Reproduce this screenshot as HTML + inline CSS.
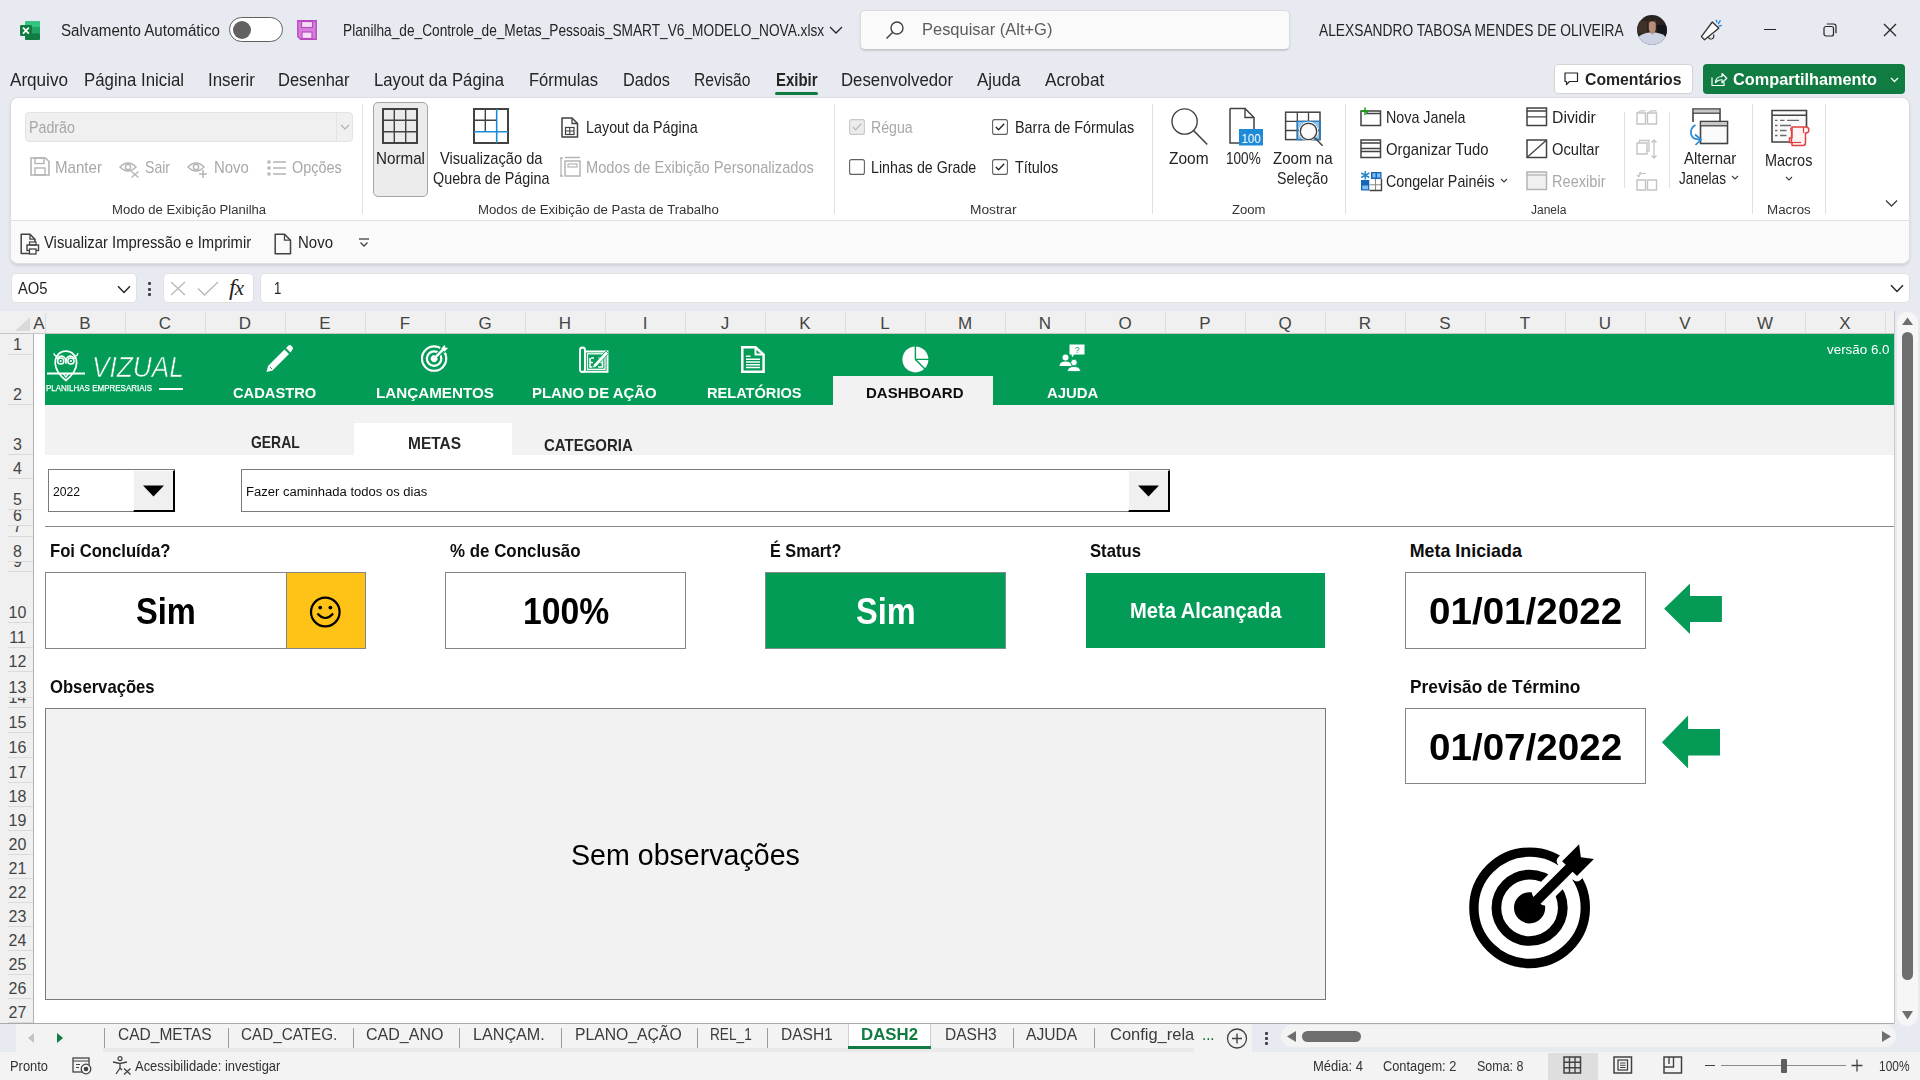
<!DOCTYPE html>
<html><head><meta charset="utf-8"><title>Excel</title>
<style>
html,body{margin:0;padding:0;width:1920px;height:1080px;overflow:hidden;background:#e7eaf0;font-family:"Liberation Sans",sans-serif;}
.t{position:absolute;white-space:nowrap;transform-origin:0 0;}
.a{position:absolute;box-sizing:border-box;}
svg.a{overflow:visible;}
</style></head><body>
<svg class="a" style="left:19px;top:19px;" width="23" height="23" viewBox="0 0 23 23">
<rect x="6" y="2" width="15" height="19" rx="1.5" fill="#21a366"/>
<rect x="6" y="2" width="15" height="6.3" rx="1.5" fill="#33c481"/>
<rect x="6" y="8.3" width="15" height="6.3" fill="#21a366"/>
<rect x="6" y="14.6" width="15" height="6.4" rx="1.5" fill="#107c41"/>
<rect x="1" y="6" width="12" height="11" rx="1.2" fill="#107c41"/>
<path d="M4 8.7 L9.8 14.6 M9.8 8.7 L4 14.6" stroke="#fff" stroke-width="1.7"/>
</svg>
<span class="t" style="left:61.30px;top:22px;font-size:15.84px;line-height:17px;font-weight:normal;font-style:normal;color:#242424;transform:scaleX(0.9553);">Salvamento Automático</span>
<div class="a" style="left:229px;top:17px;width:54px;height:25px;border:1.2px solid #5f5f5f;border-radius:13px;background:#fff;"></div>
<div class="a" style="left:233px;top:21px;width:18px;height:18px;border-radius:50%;background:#616161;"></div>
<svg class="a" style="left:297px;top:20px;" width="20" height="20" viewBox="0 0 20 20">
<path d="M0.8 0.8 H19.2 V19.2 H3.5 L0.8 16.5 Z" fill="#d77fdc" stroke="#b848be" stroke-width="1.4"/>
<rect x="4.5" y="1.5" width="11" height="6" fill="#f5dcf6" stroke="#b848be" stroke-width="1.2"/>
<rect x="5" y="12" width="10" height="6.5" fill="#f5dcf6" stroke="#b848be" stroke-width="1.2"/>
</svg>
<span class="t" style="left:342.50px;top:22px;font-size:15.99px;line-height:17px;font-weight:normal;font-style:normal;color:#242424;transform:scaleX(0.8565);">Planilha_de_Controle_de_Metas_Pessoais_SMART_V6_MODELO_NOVA.xlsx</span>
<svg class="a" style="left:829px;top:26px;" width="14" height="8" viewBox="0 0 14 8"><path d="M1 1 L7 7 L13 1" fill="none" stroke="#242424" stroke-width="1.3"/></svg>
<div class="a" style="left:860px;top:10px;width:430px;height:40px;background:#fafafa;border:1px solid #dcdcdc;border-bottom-color:#c4c4c4;border-radius:5px;box-shadow:0 1px 2px rgba(0,0,0,0.12);"></div>
<svg class="a" style="left:885px;top:20px;" width="20" height="20" viewBox="0 0 20 20"><circle cx="12" cy="8" r="6" fill="none" stroke="#424242" stroke-width="1.4"/><path d="M7.8 12.2 L1.5 18.5" stroke="#424242" stroke-width="1.5"/></svg>
<span class="t" style="left:922.00px;top:20px;font-size:16.28px;line-height:18px;font-weight:normal;font-style:normal;color:#5c5c5c;transform:scaleX(1.0123);">Pesquisar (Alt+G)</span>
<span class="t" style="left:1319.00px;top:22px;font-size:15.99px;line-height:17px;font-weight:normal;font-style:normal;color:#242424;transform:scaleX(0.8612);">ALEXSANDRO TABOSA MENDES DE OLIVEIRA</span>
<svg class="a" style="left:1637px;top:15px;" width="30" height="30" viewBox="0 0 30 30">
<defs><clipPath id="av"><circle cx="15" cy="15" r="14.9"/></clipPath></defs>
<g clip-path="url(#av)">
<rect width="30" height="30" fill="#2a2420"/>
<rect x="0" y="6" width="10" height="12" fill="#3e3128"/>
<rect x="20" y="10" width="10" height="12" fill="#15161a"/>
<path d="M0 30 V23.5 Q4 18.5 12 17.6 H18.5 Q26 18.5 30 23 V30 Z" fill="#cdd3e4"/>
<path d="M11.8 7 Q12 4.2 15.3 4.2 Q18.6 4.2 18.8 7 V13.5 Q18.6 17.8 15.3 17.8 Q12 17.8 11.8 13.5 Z" fill="#b98c78"/>
<path d="M11.6 8.5 Q11.8 3.8 15.3 3.8 Q18.8 3.8 19 8.5 Q17.5 5.8 15.3 6.2 Q13 5.8 11.6 8.5 Z" fill="#2d1e18"/>
<path d="M13.3 17 H17.3 L15.3 20 Z" fill="#b98c78"/>
</g></svg>
<svg class="a" style="left:1700px;top:19px;" width="23" height="23" viewBox="0 0 23 23">
<path d="M1.4 17.6 L12.3 3 L18.8 9.2 L4.5 20.7 Z" fill="#fafafa" stroke="#333" stroke-width="1.3" stroke-linejoin="round"/>
<path d="M8.3 17.2 Q8.8 20.8 12 19.8 Q14.5 18.8 13.6 15.3" fill="none" stroke="#333" stroke-width="1.2"/>
<path d="M16.3 1.2 L16.9 3.2 M20.2 1.6 L18.4 4.6 M18.8 7.2 L21.3 6.5" stroke="#2b88d8" stroke-width="1.3" stroke-linecap="round"/>
</svg>
<div class="a" style="left:1764px;top:29px;width:12px;height:1.2px;background:#242424;"></div>
<svg class="a" style="left:1823px;top:23px;" width="14" height="14" viewBox="0 0 14 14"><rect x="1" y="3.5" width="9.5" height="9.5" rx="2" fill="none" stroke="#242424" stroke-width="1.2"/><path d="M3.8 1 H10.5 Q13 1 13 3.5 V10.2" fill="none" stroke="#242424" stroke-width="1.2"/></svg>
<svg class="a" style="left:1883px;top:23px;" width="14" height="14" viewBox="0 0 14 14"><path d="M1 1 L13 13 M13 1 L1 13" stroke="#242424" stroke-width="1.3"/></svg>
<span class="t" style="left:9.50px;top:70px;font-size:17.44px;line-height:20px;font-weight:normal;font-style:normal;color:#242424;transform:scaleX(0.9806);">Arquivo</span>
<span class="t" style="left:84.00px;top:70px;font-size:17.44px;line-height:20px;font-weight:normal;font-style:normal;color:#242424;transform:scaleX(0.9639);">Página Inicial</span>
<span class="t" style="left:208.00px;top:70px;font-size:17.44px;line-height:20px;font-weight:normal;font-style:normal;color:#242424;transform:scaleX(0.9700);">Inserir</span>
<span class="t" style="left:278.00px;top:70px;font-size:17.44px;line-height:20px;font-weight:normal;font-style:normal;color:#242424;transform:scaleX(0.9454);">Desenhar</span>
<span class="t" style="left:374.00px;top:70px;font-size:17.44px;line-height:20px;font-weight:normal;font-style:normal;color:#242424;transform:scaleX(0.9574);">Layout da Página</span>
<span class="t" style="left:529.00px;top:70px;font-size:17.44px;line-height:20px;font-weight:normal;font-style:normal;color:#242424;transform:scaleX(0.9491);">Fórmulas</span>
<span class="t" style="left:622.50px;top:70px;font-size:17.44px;line-height:20px;font-weight:normal;font-style:normal;color:#242424;transform:scaleX(0.9321);">Dados</span>
<span class="t" style="left:694.00px;top:70px;font-size:17.44px;line-height:20px;font-weight:normal;font-style:normal;color:#242424;transform:scaleX(0.8966);">Revisão</span>
<span class="t" style="left:841.00px;top:70px;font-size:17.44px;line-height:20px;font-weight:normal;font-style:normal;color:#242424;transform:scaleX(0.9627);">Desenvolvedor</span>
<span class="t" style="left:977.00px;top:70px;font-size:17.44px;line-height:20px;font-weight:normal;font-style:normal;color:#242424;transform:scaleX(0.9750);">Ajuda</span>
<span class="t" style="left:1044.50px;top:70px;font-size:17.44px;line-height:20px;font-weight:normal;font-style:normal;color:#242424;transform:scaleX(0.9866);">Acrobat</span>
<span class="t" style="left:775.50px;top:70px;font-size:17.44px;line-height:20px;font-weight:bold;font-style:normal;color:#242424;transform:scaleX(0.8562);">Exibir</span>
<div class="a" style="left:775px;top:92px;width:43px;height:3px;background:#107c41;border-radius:2px;"></div>
<div class="a" style="left:1554px;top:64px;width:139px;height:30px;background:#fff;border:1px solid #d4d4d4;border-radius:4px;"></div>
<svg class="a" style="left:1564px;top:72px;" width="15" height="14" viewBox="0 0 15 14"><path d="M1 1 H13.5 V9.5 H5.5 L2.5 12.5 V9.5 H1 Z" fill="none" stroke="#242424" stroke-width="1.2" stroke-linejoin="round"/></svg>
<span class="t" style="left:1584.50px;top:69px;font-size:17.15px;line-height:20px;font-weight:bold;font-style:normal;color:#242424;transform:scaleX(0.9206);">Comentários</span>
<div class="a" style="left:1703px;top:64px;width:202px;height:30px;background:#107c41;border-radius:4px;"></div>
<svg class="a" style="left:1711px;top:71px;" width="17" height="16" viewBox="0 0 17 16"><path d="M1 6.5 V14.5 H13 V11" fill="none" stroke="#fff" stroke-width="1.2"/>
<path d="M4.5 11.5 Q5 5.5 11 5.5 V2.5 L15.8 7.2 L11 11.8 V8.8 Q7 8.5 4.5 11.5 Z" fill="none" stroke="#fff" stroke-width="1.2" stroke-linejoin="round"/></svg>
<span class="t" style="left:1733.00px;top:69px;font-size:17.15px;line-height:20px;font-weight:bold;font-style:normal;color:#ffffff;transform:scaleX(0.9504);">Compartilhamento</span>
<svg class="a" style="left:1890px;top:77px;" width="9" height="6" viewBox="0 0 9 6"><path d="M1 1 L4.5 4.5 L8 1" fill="none" stroke="#fff" stroke-width="1.3"/></svg>
<div class="a" style="left:10px;top:97px;width:1900px;height:167px;background:#fff;border:1px solid #dadde2;border-radius:8px;box-shadow:0 2px 3px rgba(0,0,0,0.10);"></div>
<div class="a" style="left:11px;top:221px;width:1898px;height:42px;background:#fafafa;border-radius:0 0 7px 7px;"></div>
<div class="a" style="left:11px;top:220px;width:1898px;height:1px;background:#e0e0e0;"></div>
<div class="a" style="left:362px;top:104px;width:1px;height:110px;background:#e1e1e1;"></div>
<div class="a" style="left:834px;top:104px;width:1px;height:110px;background:#e1e1e1;"></div>
<div class="a" style="left:1152px;top:104px;width:1px;height:110px;background:#e1e1e1;"></div>
<div class="a" style="left:1345px;top:104px;width:1px;height:110px;background:#e1e1e1;"></div>
<div class="a" style="left:1752px;top:104px;width:1px;height:110px;background:#e1e1e1;"></div>
<div class="a" style="left:1825px;top:104px;width:1px;height:110px;background:#e1e1e1;"></div>
<div class="a" style="left:1624px;top:112px;width:1px;height:76px;background:#e1e1e1;"></div>
<div class="a" style="left:1669px;top:112px;width:1px;height:76px;background:#e1e1e1;"></div>
<div class="a" style="left:25px;top:112px;width:328px;height:30px;background:#f0f0f0;border:1px solid #e3e3e3;border-radius:4px;"></div>
<div class="a" style="left:336px;top:113px;width:1px;height:28px;background:#e3e3e3;"></div>
<svg class="a" style="left:340px;top:124px;" width="10" height="6" viewBox="0 0 10 6"><path d="M1 1 L5 5 L9 1" fill="none" stroke="#b0b0b0" stroke-width="1.2"/></svg>
<span class="t" style="left:28.50px;top:119px;font-size:15.99px;line-height:17px;font-weight:normal;font-style:normal;color:#a6a6a6;transform:scaleX(0.8902);">Padrão</span>
<svg class="a" style="left:30px;top:157px;" width="20" height="19" viewBox="0 0 20 19"><path d="M1 1 H15.5 L19 4.5 V18 H1 Z" fill="none" stroke="#b4b4b4" stroke-width="1.6"/><rect x="5" y="1" width="9" height="5.5" fill="none" stroke="#b4b4b4" stroke-width="1.4"/><rect x="5" y="11" width="10" height="7" fill="none" stroke="#b4b4b4" stroke-width="1.4"/></svg>
<span class="t" style="left:55.00px;top:159px;font-size:15.99px;line-height:17px;font-weight:normal;font-style:normal;color:#a8a8a8;transform:scaleX(0.9446);">Manter</span>
<svg class="a" style="left:119px;top:160px;" width="21" height="18" viewBox="0 0 21 18"><path d="M1 7 Q9 -1 17 7 Q9 15 1 7 Z" fill="none" stroke="#b4b4b4" stroke-width="1.5"/><circle cx="9" cy="7" r="2.6" fill="none" stroke="#b4b4b4" stroke-width="1.4"/><path d="M12.5 11.5 L19.5 17.5 M19.5 11.5 L12.5 17.5" stroke="#b4b4b4" stroke-width="1.4"/></svg>
<span class="t" style="left:145.00px;top:159px;font-size:15.99px;line-height:17px;font-weight:normal;font-style:normal;color:#a8a8a8;transform:scaleX(0.8794);">Sair</span>
<svg class="a" style="left:187px;top:160px;" width="21" height="18" viewBox="0 0 21 18"><path d="M1 7 Q9 -1 17 7 Q9 15 1 7 Z" fill="none" stroke="#b4b4b4" stroke-width="1.5"/><circle cx="9" cy="7" r="2.6" fill="none" stroke="#b4b4b4" stroke-width="1.4"/><path d="M16 10 V18 M12 14 H20" stroke="#b4b4b4" stroke-width="1.5"/></svg>
<span class="t" style="left:213.50px;top:159px;font-size:15.99px;line-height:17px;font-weight:normal;font-style:normal;color:#a8a8a8;transform:scaleX(0.9326);">Novo</span>
<svg class="a" style="left:267px;top:160px;" width="20" height="16" viewBox="0 0 20 16"><rect x="0.5" y="0.5" width="3" height="3" fill="#b4b4b4"/><rect x="0.5" y="6.5" width="3" height="3" fill="#b4b4b4"/><rect x="0.5" y="12.5" width="3" height="3" fill="#b4b4b4"/><path d="M6 2 H19 M6 8 H19 M6 14 H19" stroke="#b4b4b4" stroke-width="1.5"/></svg>
<span class="t" style="left:292.00px;top:159px;font-size:15.99px;line-height:17px;font-weight:normal;font-style:normal;color:#a8a8a8;transform:scaleX(0.9021);">Opções</span>
<span class="t" style="left:111.50px;top:202px;font-size:13.52px;line-height:15px;font-weight:normal;font-style:normal;color:#333;transform:scaleX(0.9673);">Modo de Exibição Planilha</span>
<div class="a" style="left:373px;top:102px;width:55px;height:95px;background:#ebebeb;border:1px solid #a5a5a5;border-radius:5px;"></div>
<svg class="a" style="left:382px;top:108px;" width="36" height="36" viewBox="0 0 36 36"><rect x="1" y="1" width="34" height="34" fill="none" stroke="#424242" stroke-width="2"/><path d="M12.3 1 V35 M23.7 1 V35 M1 12.3 H35 M1 23.7 H35" stroke="#424242" stroke-width="1.4"/></svg>
<span class="t" style="left:375.50px;top:150px;font-size:15.99px;line-height:17px;font-weight:normal;font-style:normal;color:#242424;transform:scaleX(0.9509);">Normal</span>
<svg class="a" style="left:473px;top:108px;" width="36" height="36" viewBox="0 0 36 36"><rect x="1" y="1" width="34" height="34" fill="none" stroke="#424242" stroke-width="2"/><path d="M12.3 1 V23.7 M1 12.3 H23.7" stroke="#424242" stroke-width="1.4"/><path d="M23.7 1 V35 M1 23.7 H35" stroke="#1e8bd6" stroke-width="1.6"/></svg>
<span class="t" style="left:440.00px;top:150px;font-size:15.99px;line-height:17px;font-weight:normal;font-style:normal;color:#242424;transform:scaleX(0.9175);">Visualização da</span>
<span class="t" style="left:432.50px;top:170px;font-size:15.99px;line-height:17px;font-weight:normal;font-style:normal;color:#242424;transform:scaleX(0.8976);">Quebra de Página</span>
<svg class="a" style="left:561px;top:117px;" width="18" height="21" viewBox="0 0 18 21"><path d="M1 1 H11 L16.5 6.5 V20 H1 Z" fill="none" stroke="#424242" stroke-width="1.5" stroke-linejoin="round"/><path d="M11 1 V6.5 H16.5" fill="none" stroke="#424242" stroke-width="1.3"/><rect x="4.5" y="10.5" width="8.5" height="7" fill="none" stroke="#424242" stroke-width="1.2"/><path d="M8.75 10.5 V17.5 M4.5 14 H13" stroke="#424242" stroke-width="1.1"/></svg>
<span class="t" style="left:585.80px;top:119px;font-size:15.99px;line-height:17px;font-weight:normal;font-style:normal;color:#242424;transform:scaleX(0.8974);">Layout da Página</span>
<svg class="a" style="left:560px;top:156px;" width="21" height="21" viewBox="0 0 21 21"><path d="M1 2 V20 M0 2 H3 M0 20 H3" stroke="#b4b4b4" stroke-width="1.3"/><rect x="5" y="5" width="15" height="15" fill="none" stroke="#b4b4b4" stroke-width="1.5"/><path d="M5 1.5 H20" stroke="#b4b4b4" stroke-width="1.5"/><rect x="8" y="8" width="9" height="3" fill="none" stroke="#b4b4b4" stroke-width="1.2"/></svg>
<span class="t" style="left:585.80px;top:159px;font-size:15.99px;line-height:17px;font-weight:normal;font-style:normal;color:#a8a8a8;transform:scaleX(0.9162);">Modos de Exibição Personalizados</span>
<span class="t" style="left:478.00px;top:202px;font-size:13.52px;line-height:15px;font-weight:normal;font-style:normal;color:#333;transform:scaleX(0.9770);">Modos de Exibição de Pasta de Trabalho</span>
<svg class="a" style="left:849px;top:119px;" width="16" height="16" viewBox="0 0 16 16"><rect x="0.6" y="0.6" width="14.8" height="14.8" rx="2" fill="#ececec" stroke="#c8c8c8" stroke-width="1.1"/><path d="M3.8 8 L6.6 10.8 L12.2 4.8" fill="none" stroke="#bdbdbd" stroke-width="1.3"/></svg>
<span class="t" style="left:871.00px;top:119px;font-size:15.99px;line-height:17px;font-weight:normal;font-style:normal;color:#a8a8a8;transform:scaleX(0.8826);">Régua</span>
<svg class="a" style="left:849px;top:159px;" width="16" height="16" viewBox="0 0 16 16"><rect x="0.6" y="0.6" width="14.8" height="14.8" rx="2" fill="#fff" stroke="#616161" stroke-width="1.1"/></svg>
<span class="t" style="left:871.00px;top:159px;font-size:15.99px;line-height:17px;font-weight:normal;font-style:normal;color:#242424;transform:scaleX(0.8907);">Linhas de Grade</span>
<svg class="a" style="left:992px;top:119px;" width="16" height="16" viewBox="0 0 16 16"><rect x="0.6" y="0.6" width="14.8" height="14.8" rx="2" fill="#fff" stroke="#616161" stroke-width="1.1"/><path d="M3.8 8 L6.6 10.8 L12.2 4.8" fill="none" stroke="#242424" stroke-width="1.3"/></svg>
<span class="t" style="left:1014.70px;top:119px;font-size:15.99px;line-height:17px;font-weight:normal;font-style:normal;color:#242424;transform:scaleX(0.9011);">Barra de Fórmulas</span>
<svg class="a" style="left:992px;top:159px;" width="16" height="16" viewBox="0 0 16 16"><rect x="0.6" y="0.6" width="14.8" height="14.8" rx="2" fill="#fff" stroke="#616161" stroke-width="1.1"/><path d="M3.8 8 L6.6 10.8 L12.2 4.8" fill="none" stroke="#242424" stroke-width="1.3"/></svg>
<span class="t" style="left:1014.70px;top:159px;font-size:15.99px;line-height:17px;font-weight:normal;font-style:normal;color:#242424;transform:scaleX(0.9024);">Títulos</span>
<span class="t" style="left:970.30px;top:202px;font-size:13.52px;line-height:15px;font-weight:normal;font-style:normal;color:#333;transform:scaleX(1.0172);">Mostrar</span>
<svg class="a" style="left:1169px;top:106px;" width="41" height="41" viewBox="0 0 41 41"><circle cx="15.6" cy="15.5" r="12.6" fill="none" stroke="#424242" stroke-width="1.4"/><path d="M24.6 24.6 L38.3 38.5" stroke="#424242" stroke-width="1.5"/></svg>
<span class="t" style="left:1169.00px;top:150px;font-size:15.99px;line-height:17px;font-weight:normal;font-style:normal;color:#242424;transform:scaleX(0.9690);">Zoom</span>
<svg class="a" style="left:1228px;top:107px;" width="36" height="40" viewBox="0 0 36 40"><path d="M2 1.5 H17 L26 10.5 V22 M2 1.5 V36 H11" fill="none" stroke="#424242" stroke-width="1.5"/><path d="M17 1.5 V10.5 H26" fill="none" stroke="#424242" stroke-width="1.4"/><rect x="11" y="22" width="24" height="16.5" fill="#1e8bd6"/><text x="23" y="35.5" font-family="Liberation Sans" font-size="13.5" fill="#fff" text-anchor="middle" textLength="19" lengthAdjust="spacingAndGlyphs">100</text></svg>
<span class="t" style="left:1226.00px;top:150px;font-size:15.99px;line-height:17px;font-weight:normal;font-style:normal;color:#242424;transform:scaleX(0.8484);">100%</span>
<svg class="a" style="left:1284px;top:110px;" width="42" height="38" viewBox="0 0 42 38"><rect x="13.3" y="11.4" width="22.7" height="18.2" fill="#8cc4f0"/><rect x="1.6" y="2.2" width="34.4" height="27.4" fill="none" stroke="#424242" stroke-width="1.5"/><path d="M13.3 2.2 V29.6 M24.5 2.2 V29.6 M1.6 11.4 H36 M1.6 20.5 H36" stroke="#424242" stroke-width="1.3"/><path d="M13.3 11.4 H36 V29.6 H13.3 Z" fill="none" stroke="#2a7fc9" stroke-width="1.3"/><circle cx="24.5" cy="21.4" r="8.2" fill="#fafafa" stroke="#fff" stroke-width="3.2"/><circle cx="24.5" cy="21.4" r="8.2" fill="#fafafa" stroke="#424242" stroke-width="1.4"/><path d="M30.3 27.2 L38.6 35.7" stroke="#424242" stroke-width="1.5"/></svg>
<span class="t" style="left:1272.80px;top:150px;font-size:15.99px;line-height:17px;font-weight:normal;font-style:normal;color:#242424;transform:scaleX(0.9444);">Zoom na</span>
<span class="t" style="left:1277.40px;top:170px;font-size:15.99px;line-height:17px;font-weight:normal;font-style:normal;color:#242424;transform:scaleX(0.8826);">Seleção</span>
<span class="t" style="left:1232.00px;top:202px;font-size:13.52px;line-height:15px;font-weight:normal;font-style:normal;color:#333;transform:scaleX(0.9696);">Zoom</span>
<svg class="a" style="left:1360px;top:107px;" width="22" height="20" viewBox="0 0 22 20"><rect x="1" y="4" width="19.5" height="14.5" fill="none" stroke="#424242" stroke-width="1.5"/><path d="M7 4 V6.5 H20.5" fill="none" stroke="#424242" stroke-width="1.4"/><path d="M5 0.5 V8 M1.2 4.2 H8.8" stroke="#13a10e" stroke-width="1.5"/></svg>
<span class="t" style="left:1386.00px;top:109px;font-size:15.99px;line-height:17px;font-weight:normal;font-style:normal;color:#242424;transform:scaleX(0.8932);">Nova Janela</span>
<svg class="a" style="left:1360px;top:139px;" width="22" height="20" viewBox="0 0 22 20"><rect x="1" y="1" width="19.5" height="17.5" fill="none" stroke="#424242" stroke-width="1.5"/><path d="M1 4 H20.5 M1 9.5 H20.5 M1 12.5 H20.5" stroke="#424242" stroke-width="1.3"/></svg>
<span class="t" style="left:1386.00px;top:141px;font-size:15.99px;line-height:17px;font-weight:normal;font-style:normal;color:#242424;transform:scaleX(0.9310);">Organizar Tudo</span>
<svg class="a" style="left:1360px;top:170px;" width="22" height="22" viewBox="0 0 22 22"><rect x="11" y="2" width="10.5" height="7" fill="#1565b8"/><rect x="12.5" y="3.3" width="3" height="4.2" fill="#7cc2f5"/><rect x="17" y="3.3" width="3.3" height="4.2" fill="#7cc2f5"/><rect x="1" y="10" width="8.5" height="10.5" fill="#1565b8"/><rect x="2.3" y="15.5" width="5.8" height="3.8" fill="#7cc2f5"/><rect x="9.5" y="9" width="12" height="11.5" fill="#fff"/><path d="M15.5 9 V20.5 M9.5 14.7 H21.5" stroke="#8a8a8a" stroke-width="1.1"/><path d="M21.5 9 V20.5 H9.5" fill="none" stroke="#424242" stroke-width="1.4"/><path d="M5.3 1 V9.5 M1.3 3 L9.3 7.5 M9.3 3 L1.3 7.5" stroke="#2a86c8" stroke-width="1.5"/></svg>
<span class="t" style="left:1386.00px;top:173px;font-size:15.99px;line-height:17px;font-weight:normal;font-style:normal;color:#242424;transform:scaleX(0.8927);">Congelar Painéis</span>
<svg class="a" style="left:1500px;top:178px;" width="8" height="6" viewBox="0 0 8 6"><path d="M1 1 L4 4 L7 1" fill="none" stroke="#424242" stroke-width="1.2"/></svg>
<svg class="a" style="left:1526px;top:107px;" width="22" height="20" viewBox="0 0 22 20"><rect x="1" y="1" width="19.5" height="17.5" fill="none" stroke="#424242" stroke-width="1.5"/><path d="M1 4 H20.5 M1 9.8 H20.5" stroke="#424242" stroke-width="1.3"/></svg>
<span class="t" style="left:1552.40px;top:109px;font-size:15.99px;line-height:17px;font-weight:normal;font-style:normal;color:#242424;transform:scaleX(0.9861);">Dividir</span>
<svg class="a" style="left:1526px;top:139px;" width="22" height="20" viewBox="0 0 22 20"><rect x="1" y="1" width="19.5" height="17.5" fill="none" stroke="#424242" stroke-width="1.5"/><path d="M1.5 18 L20 1.5" stroke="#424242" stroke-width="1.3"/></svg>
<span class="t" style="left:1552.40px;top:141px;font-size:15.99px;line-height:17px;font-weight:normal;font-style:normal;color:#242424;transform:scaleX(0.9198);">Ocultar</span>
<svg class="a" style="left:1526px;top:171px;" width="22" height="20" viewBox="0 0 22 20"><rect x="1" y="1" width="19.5" height="17.5" fill="#f0f0f0" stroke="#b4b4b4" stroke-width="1.5"/><path d="M1 4 H20.5" stroke="#b4b4b4" stroke-width="1.3"/></svg>
<span class="t" style="left:1552.40px;top:173px;font-size:15.99px;line-height:17px;font-weight:normal;font-style:normal;color:#a8a8a8;transform:scaleX(0.9123);">Reexibir</span>
<svg class="a" style="left:1636px;top:110px;" width="22" height="15" viewBox="0 0 22 15"><path d="M1 3 H9.5 V14 H1 Z M11.5 3 H20.5 V14 H11.5 Z" fill="none" stroke="#c4c4c4" stroke-width="1.4"/><path d="M1 3 L5 0.8 H9.5 M11.5 3 L15 0.8 H20.5" fill="none" stroke="#c4c4c4" stroke-width="1.2"/></svg>
<svg class="a" style="left:1636px;top:139px;" width="22" height="20" viewBox="0 0 22 20"><path d="M1 4 H11 V15 H1 Z" fill="none" stroke="#c4c4c4" stroke-width="1.4"/><path d="M3.5 4 V1.5 H13 V12 H11" fill="none" stroke="#c4c4c4" stroke-width="1.3"/><path d="M18 1 V19 M15.5 3.5 L18 1 L20.5 3.5 M15.5 16.5 L18 19 L20.5 16.5" fill="none" stroke="#c4c4c4" stroke-width="1.3"/></svg>
<svg class="a" style="left:1636px;top:172px;" width="22" height="19" viewBox="0 0 22 19"><path d="M1 8 H9.5 V18 H1 Z M11.5 8 H20.5 V18 H11.5 Z" fill="none" stroke="#c4c4c4" stroke-width="1.4"/><path d="M3 5 Q3 1.5 7 1.5 H10 M5 0 L3 2 M3 5 L1 3" fill="none" stroke="#c4c4c4" stroke-width="1.2"/></svg>
<svg class="a" style="left:1688px;top:107px;" width="42" height="40" viewBox="0 0 42 40"><path d="M5 15 V2 H32 V15" fill="none" stroke="#424242" stroke-width="1.6"/><rect x="5.8" y="2.8" width="25.4" height="3" fill="#c8c8c8"/><path d="M5 6.2 H32" stroke="#424242" stroke-width="1.3"/><rect x="12.5" y="14.5" width="27" height="22" fill="#fafafa" stroke="#424242" stroke-width="1.6"/><rect x="13.3" y="15.3" width="25.4" height="3" fill="#c8c8c8"/><path d="M12.5 18.8 H39.5" stroke="#424242" stroke-width="1.3"/><path d="M7.5 18 Q2 21 3 27 Q4.5 33 13 32.5" fill="none" stroke="#2a8ad4" stroke-width="1.7"/><path d="M7 27.5 L13 32.5 L7.5 38" fill="none" stroke="#2a8ad4" stroke-width="1.7"/></svg>
<span class="t" style="left:1683.50px;top:150px;font-size:15.99px;line-height:17px;font-weight:normal;font-style:normal;color:#242424;transform:scaleX(0.9341);">Alternar</span>
<span class="t" style="left:1679.00px;top:170px;font-size:15.99px;line-height:17px;font-weight:normal;font-style:normal;color:#242424;transform:scaleX(0.8528);">Janelas</span>
<svg class="a" style="left:1731px;top:175px;" width="8" height="6" viewBox="0 0 8 6"><path d="M1 1 L4 4 L7 1" fill="none" stroke="#424242" stroke-width="1.2"/></svg>
<span class="t" style="left:1531.20px;top:202px;font-size:13.52px;line-height:15px;font-weight:normal;font-style:normal;color:#333;transform:scaleX(0.8883);">Janela</span>
<svg class="a" style="left:1770px;top:108px;" width="41" height="40" viewBox="0 0 41 40"><path d="M21 34 H2 V2.5 H36.5 V25" fill="#fafafa" stroke="#424242" stroke-width="1.6"/><path d="M2 7.3 H36.5" stroke="#424242" stroke-width="1.5"/><path d="M5 12.3 H7.5 M10 12.3 H14.5 M17 12.3 H29 M5 17.5 H7.5 M10 17.5 H21 M5 22.5 H7.5 M10 22.5 H16.5 M5 27.5 H7.5 M10 27.5 H16.5" stroke="#6b6b6b" stroke-width="1.3"/><path d="M22 19 H36 Q38.8 19 38.8 22 Q38.8 25 36 25 H35.5 V35 Q35.5 37.5 33 37.5 H22 V34.5 H19.5 V30 H22 Z" fill="#fdf3f3" stroke="#e0403f" stroke-width="1.5" stroke-linejoin="round"/><path d="M21.5 19.5 Q20 21 21.5 23 V34.5" fill="none" stroke="#e0403f" stroke-width="1.3"/><path d="M19.5 34.5 H31" stroke="#e0403f" stroke-width="1.2"/><path d="M33.5 19 V25" stroke="#e0403f" stroke-width="1.2"/></svg>
<span class="t" style="left:1765.40px;top:152px;font-size:15.99px;line-height:17px;font-weight:normal;font-style:normal;color:#242424;transform:scaleX(0.9044);">Macros</span>
<svg class="a" style="left:1785px;top:176px;" width="8" height="6" viewBox="0 0 8 6"><path d="M1 1 L4 4 L7 1" fill="none" stroke="#424242" stroke-width="1.2"/></svg>
<span class="t" style="left:1766.90px;top:202px;font-size:13.52px;line-height:15px;font-weight:normal;font-style:normal;color:#333;transform:scaleX(0.9885);">Macros</span>
<svg class="a" style="left:1885px;top:199px;" width="13" height="9" viewBox="0 0 13 9"><path d="M1 1.5 L6.5 7 L12 1.5" fill="none" stroke="#424242" stroke-width="1.4"/></svg>
<svg class="a" style="left:20px;top:233px;" width="20" height="22" viewBox="0 0 20 22"><path d="M9 20.5 H1.2 V1.2 H10 L15 6.2 V9" fill="none" stroke="#424242" stroke-width="1.5" stroke-linejoin="round"/><path d="M10 1.2 V6.2 H15" fill="none" stroke="#424242" stroke-width="1.3"/><rect x="7" y="12" width="11.5" height="5.5" fill="#fff" stroke="#424242" stroke-width="1.4"/><rect x="9.5" y="9" width="6.5" height="3" fill="none" stroke="#424242" stroke-width="1.2"/><rect x="9.5" y="16" width="6.5" height="5" fill="#fff" stroke="#424242" stroke-width="1.3"/></svg>
<span class="t" style="left:44.40px;top:232px;font-size:17.15px;line-height:20px;font-weight:normal;font-style:normal;color:#242424;transform:scaleX(0.8643);">Visualizar Impressão e Imprimir</span>
<svg class="a" style="left:274px;top:233px;" width="18" height="22" viewBox="0 0 18 22"><path d="M1.2 1.2 H10.5 L16.5 7.2 V20.8 H1.2 Z" fill="none" stroke="#424242" stroke-width="1.5" stroke-linejoin="round"/><path d="M10.5 1.2 V7.2 H16.5" fill="none" stroke="#424242" stroke-width="1.3"/></svg>
<span class="t" style="left:298.30px;top:232px;font-size:17.15px;line-height:20px;font-weight:normal;font-style:normal;color:#242424;transform:scaleX(0.8743);">Novo</span>
<svg class="a" style="left:358px;top:238px;" width="12" height="10" viewBox="0 0 12 10"><path d="M1 1 H11" stroke="#424242" stroke-width="1.3"/><path d="M2.5 4.5 L6 8 L9.5 4.5" fill="none" stroke="#424242" stroke-width="1.3"/></svg>
<div class="a" style="left:11px;top:273px;width:126px;height:30px;background:#fff;border:1px solid #e1e1e1;border-radius:5px;"></div>
<span class="t" style="left:17.70px;top:279px;font-size:16.72px;line-height:19px;font-weight:normal;font-style:normal;color:#242424;transform:scaleX(0.8850);">AO5</span>
<svg class="a" style="left:117px;top:285px;" width="14" height="9" viewBox="0 0 14 9"><path d="M1 1.2 L7 7.5 L13 1.2" fill="none" stroke="#242424" stroke-width="1.4"/></svg>
<div class="a" style="left:148px;top:282px;width:3px;height:3px;background:#424242;border-radius:1px;"></div>
<div class="a" style="left:148px;top:287.5px;width:3px;height:3px;background:#424242;border-radius:1px;"></div>
<div class="a" style="left:148px;top:293px;width:3px;height:3px;background:#424242;border-radius:1px;"></div>
<div class="a" style="left:163px;top:273px;width:91px;height:30px;background:#fff;border:1px solid #e1e1e1;border-radius:5px;"></div>
<svg class="a" style="left:170px;top:281px;" width="16" height="15" viewBox="0 0 16 15"><path d="M1 1 L15 14 M15 1 L1 14" stroke="#b8b8b8" stroke-width="1.3"/></svg>
<svg class="a" style="left:197px;top:281px;" width="22" height="15" viewBox="0 0 22 15"><path d="M1 7.5 L7.5 14 L21 1" fill="none" stroke="#b8b8b8" stroke-width="1.3"/></svg>
<span class="t" style="left:229px;top:273px;font-family:'Liberation Serif',serif;font-style:italic;font-weight:normal;font-size:24px;line-height:28px;color:#242424;">f<span style="font-size:21px;position:relative;left:-1px;">x</span></span>
<div class="a" style="left:260px;top:273px;width:1650px;height:30px;background:#fff;border:1px solid #e1e1e1;border-radius:5px;"></div>
<span class="t" style="left:274.00px;top:279px;font-size:16.72px;line-height:19px;font-weight:normal;font-style:normal;color:#242424;transform:scaleX(0.7855);">1</span>
<svg class="a" style="left:1890px;top:284px;" width="14" height="9" viewBox="0 0 14 9"><path d="M1 1.2 L7 7.5 L13 1.2" fill="none" stroke="#242424" stroke-width="1.4"/></svg>
<div class="a" style="left:0px;top:311px;width:1894px;height:23px;background:#f0f0f0;"></div>
<div class="a" style="left:0px;top:334px;width:33px;height:689px;background:#f0f0f0;"></div>
<div class="a" style="left:33px;top:334px;width:1861px;height:689px;background:#fff;"></div>
<svg class="a" style="left:15px;top:317px;" width="16" height="14" viewBox="0 0 16 14"><path d="M15 0 V14 H0 Z" fill="#dadada"/></svg>
<div class="a" style="left:0px;top:333px;width:1894px;height:1px;background:#c6c6c6;"></div>
<div class="a" style="left:33px;top:334px;width:1px;height:689px;background:#b0b0b0;"></div>
<div class="a" style="left:33px;top:311px;width:12px;height:22px;overflow:hidden;"><span class="t" style="left:0;width:12px;text-align:center;top:3px;font-size:17px;line-height:20px;color:#444444;">A</span></div>
<div class="a" style="left:45px;top:313px;width:1px;height:20px;background:#dcdcdc;"></div>
<div class="a" style="left:45px;top:311px;width:80px;height:22px;overflow:hidden;"><span class="t" style="left:0;width:80px;text-align:center;top:3px;font-size:17px;line-height:20px;color:#444444;">B</span></div>
<div class="a" style="left:125px;top:313px;width:1px;height:20px;background:#dcdcdc;"></div>
<div class="a" style="left:125px;top:311px;width:80px;height:22px;overflow:hidden;"><span class="t" style="left:0;width:80px;text-align:center;top:3px;font-size:17px;line-height:20px;color:#444444;">C</span></div>
<div class="a" style="left:205px;top:313px;width:1px;height:20px;background:#dcdcdc;"></div>
<div class="a" style="left:205px;top:311px;width:80px;height:22px;overflow:hidden;"><span class="t" style="left:0;width:80px;text-align:center;top:3px;font-size:17px;line-height:20px;color:#444444;">D</span></div>
<div class="a" style="left:285px;top:313px;width:1px;height:20px;background:#dcdcdc;"></div>
<div class="a" style="left:285px;top:311px;width:80px;height:22px;overflow:hidden;"><span class="t" style="left:0;width:80px;text-align:center;top:3px;font-size:17px;line-height:20px;color:#444444;">E</span></div>
<div class="a" style="left:365px;top:313px;width:1px;height:20px;background:#dcdcdc;"></div>
<div class="a" style="left:365px;top:311px;width:80px;height:22px;overflow:hidden;"><span class="t" style="left:0;width:80px;text-align:center;top:3px;font-size:17px;line-height:20px;color:#444444;">F</span></div>
<div class="a" style="left:445px;top:313px;width:1px;height:20px;background:#dcdcdc;"></div>
<div class="a" style="left:445px;top:311px;width:80px;height:22px;overflow:hidden;"><span class="t" style="left:0;width:80px;text-align:center;top:3px;font-size:17px;line-height:20px;color:#444444;">G</span></div>
<div class="a" style="left:525px;top:313px;width:1px;height:20px;background:#dcdcdc;"></div>
<div class="a" style="left:525px;top:311px;width:80px;height:22px;overflow:hidden;"><span class="t" style="left:0;width:80px;text-align:center;top:3px;font-size:17px;line-height:20px;color:#444444;">H</span></div>
<div class="a" style="left:605px;top:313px;width:1px;height:20px;background:#dcdcdc;"></div>
<div class="a" style="left:605px;top:311px;width:80px;height:22px;overflow:hidden;"><span class="t" style="left:0;width:80px;text-align:center;top:3px;font-size:17px;line-height:20px;color:#444444;">I</span></div>
<div class="a" style="left:685px;top:313px;width:1px;height:20px;background:#dcdcdc;"></div>
<div class="a" style="left:685px;top:311px;width:80px;height:22px;overflow:hidden;"><span class="t" style="left:0;width:80px;text-align:center;top:3px;font-size:17px;line-height:20px;color:#444444;">J</span></div>
<div class="a" style="left:765px;top:313px;width:1px;height:20px;background:#dcdcdc;"></div>
<div class="a" style="left:765px;top:311px;width:80px;height:22px;overflow:hidden;"><span class="t" style="left:0;width:80px;text-align:center;top:3px;font-size:17px;line-height:20px;color:#444444;">K</span></div>
<div class="a" style="left:845px;top:313px;width:1px;height:20px;background:#dcdcdc;"></div>
<div class="a" style="left:845px;top:311px;width:80px;height:22px;overflow:hidden;"><span class="t" style="left:0;width:80px;text-align:center;top:3px;font-size:17px;line-height:20px;color:#444444;">L</span></div>
<div class="a" style="left:925px;top:313px;width:1px;height:20px;background:#dcdcdc;"></div>
<div class="a" style="left:925px;top:311px;width:80px;height:22px;overflow:hidden;"><span class="t" style="left:0;width:80px;text-align:center;top:3px;font-size:17px;line-height:20px;color:#444444;">M</span></div>
<div class="a" style="left:1005px;top:313px;width:1px;height:20px;background:#dcdcdc;"></div>
<div class="a" style="left:1005px;top:311px;width:80px;height:22px;overflow:hidden;"><span class="t" style="left:0;width:80px;text-align:center;top:3px;font-size:17px;line-height:20px;color:#444444;">N</span></div>
<div class="a" style="left:1085px;top:313px;width:1px;height:20px;background:#dcdcdc;"></div>
<div class="a" style="left:1085px;top:311px;width:80px;height:22px;overflow:hidden;"><span class="t" style="left:0;width:80px;text-align:center;top:3px;font-size:17px;line-height:20px;color:#444444;">O</span></div>
<div class="a" style="left:1165px;top:313px;width:1px;height:20px;background:#dcdcdc;"></div>
<div class="a" style="left:1165px;top:311px;width:80px;height:22px;overflow:hidden;"><span class="t" style="left:0;width:80px;text-align:center;top:3px;font-size:17px;line-height:20px;color:#444444;">P</span></div>
<div class="a" style="left:1245px;top:313px;width:1px;height:20px;background:#dcdcdc;"></div>
<div class="a" style="left:1245px;top:311px;width:80px;height:22px;overflow:hidden;"><span class="t" style="left:0;width:80px;text-align:center;top:3px;font-size:17px;line-height:20px;color:#444444;">Q</span></div>
<div class="a" style="left:1325px;top:313px;width:1px;height:20px;background:#dcdcdc;"></div>
<div class="a" style="left:1325px;top:311px;width:80px;height:22px;overflow:hidden;"><span class="t" style="left:0;width:80px;text-align:center;top:3px;font-size:17px;line-height:20px;color:#444444;">R</span></div>
<div class="a" style="left:1405px;top:313px;width:1px;height:20px;background:#dcdcdc;"></div>
<div class="a" style="left:1405px;top:311px;width:80px;height:22px;overflow:hidden;"><span class="t" style="left:0;width:80px;text-align:center;top:3px;font-size:17px;line-height:20px;color:#444444;">S</span></div>
<div class="a" style="left:1485px;top:313px;width:1px;height:20px;background:#dcdcdc;"></div>
<div class="a" style="left:1485px;top:311px;width:80px;height:22px;overflow:hidden;"><span class="t" style="left:0;width:80px;text-align:center;top:3px;font-size:17px;line-height:20px;color:#444444;">T</span></div>
<div class="a" style="left:1565px;top:313px;width:1px;height:20px;background:#dcdcdc;"></div>
<div class="a" style="left:1565px;top:311px;width:80px;height:22px;overflow:hidden;"><span class="t" style="left:0;width:80px;text-align:center;top:3px;font-size:17px;line-height:20px;color:#444444;">U</span></div>
<div class="a" style="left:1645px;top:313px;width:1px;height:20px;background:#dcdcdc;"></div>
<div class="a" style="left:1645px;top:311px;width:80px;height:22px;overflow:hidden;"><span class="t" style="left:0;width:80px;text-align:center;top:3px;font-size:17px;line-height:20px;color:#444444;">V</span></div>
<div class="a" style="left:1725px;top:313px;width:1px;height:20px;background:#dcdcdc;"></div>
<div class="a" style="left:1725px;top:311px;width:80px;height:22px;overflow:hidden;"><span class="t" style="left:0;width:80px;text-align:center;top:3px;font-size:17px;line-height:20px;color:#444444;">W</span></div>
<div class="a" style="left:1805px;top:313px;width:1px;height:20px;background:#dcdcdc;"></div>
<div class="a" style="left:1805px;top:311px;width:80px;height:22px;overflow:hidden;"><span class="t" style="left:0;width:80px;text-align:center;top:3px;font-size:17px;line-height:20px;color:#444444;">X</span></div>
<div class="a" style="left:1885px;top:313px;width:1px;height:20px;background:#dcdcdc;"></div>
<div class="a" style="left:8px;top:354px;width:25px;height:1px;background:#dadada;"></div>
<div class="a" style="left:0;top:334px;width:33px;height:20px;overflow:hidden;"><span class="t" style="left:1px;width:33px;text-align:center;top:2.9559999999999995px;font-size:16px;line-height:16px;color:#444444;">1</span></div>
<div class="a" style="left:8px;top:404px;width:25px;height:1px;background:#dadada;"></div>
<div class="a" style="left:0;top:355px;width:33px;height:49px;overflow:hidden;"><span class="t" style="left:1px;width:33px;text-align:center;top:31.956px;font-size:16px;line-height:16px;color:#444444;">2</span></div>
<div class="a" style="left:8px;top:454px;width:25px;height:1px;background:#dadada;"></div>
<div class="a" style="left:0;top:405px;width:33px;height:49px;overflow:hidden;"><span class="t" style="left:1px;width:33px;text-align:center;top:31.956px;font-size:16px;line-height:16px;color:#444444;">3</span></div>
<div class="a" style="left:8px;top:478px;width:25px;height:1px;background:#dadada;"></div>
<div class="a" style="left:0;top:455px;width:33px;height:23px;overflow:hidden;"><span class="t" style="left:1px;width:33px;text-align:center;top:5.9559999999999995px;font-size:16px;line-height:16px;color:#444444;">4</span></div>
<div class="a" style="left:8px;top:509px;width:25px;height:1px;background:#dadada;"></div>
<div class="a" style="left:0;top:479px;width:33px;height:30px;overflow:hidden;"><span class="t" style="left:1px;width:33px;text-align:center;top:12.956px;font-size:16px;line-height:16px;color:#444444;">5</span></div>
<div class="a" style="left:8px;top:525px;width:25px;height:1px;background:#dadada;"></div>
<div class="a" style="left:0;top:510px;width:33px;height:15px;overflow:hidden;"><span class="t" style="left:1px;width:33px;text-align:center;top:-2.0440000000000005px;font-size:16px;line-height:16px;color:#444444;">6</span></div>
<div class="a" style="left:8px;top:536px;width:25px;height:1px;background:#dadada;"></div>
<div class="a" style="left:0;top:526px;width:33px;height:10px;overflow:hidden;"><span class="t" style="left:1px;width:33px;text-align:center;top:-7.0440000000000005px;font-size:16px;line-height:16px;color:#444444;">7</span></div>
<div class="a" style="left:8px;top:561px;width:25px;height:1px;background:#dadada;"></div>
<div class="a" style="left:0;top:537px;width:33px;height:24px;overflow:hidden;"><span class="t" style="left:1px;width:33px;text-align:center;top:6.9559999999999995px;font-size:16px;line-height:16px;color:#444444;">8</span></div>
<div class="a" style="left:8px;top:571px;width:25px;height:1px;background:#dadada;"></div>
<div class="a" style="left:0;top:562px;width:33px;height:9px;overflow:hidden;"><span class="t" style="left:1px;width:33px;text-align:center;top:-8.044px;font-size:16px;line-height:16px;color:#444444;">9</span></div>
<div class="a" style="left:8px;top:622px;width:25px;height:1px;background:#dadada;"></div>
<div class="a" style="left:0;top:572px;width:33px;height:50px;overflow:hidden;"><span class="t" style="left:1px;width:33px;text-align:center;top:32.956px;font-size:16px;line-height:16px;color:#444444;">10</span></div>
<div class="a" style="left:8px;top:647px;width:25px;height:1px;background:#dadada;"></div>
<div class="a" style="left:0;top:623px;width:33px;height:24px;overflow:hidden;"><span class="t" style="left:1px;width:33px;text-align:center;top:6.9559999999999995px;font-size:16px;line-height:16px;color:#444444;">11</span></div>
<div class="a" style="left:8px;top:671px;width:25px;height:1px;background:#dadada;"></div>
<div class="a" style="left:0;top:648px;width:33px;height:23px;overflow:hidden;"><span class="t" style="left:1px;width:33px;text-align:center;top:5.9559999999999995px;font-size:16px;line-height:16px;color:#444444;">12</span></div>
<div class="a" style="left:8px;top:697px;width:25px;height:1px;background:#dadada;"></div>
<div class="a" style="left:0;top:672px;width:33px;height:25px;overflow:hidden;"><span class="t" style="left:1px;width:33px;text-align:center;top:7.9559999999999995px;font-size:16px;line-height:16px;color:#444444;">13</span></div>
<div class="a" style="left:8px;top:707px;width:25px;height:1px;background:#dadada;"></div>
<div class="a" style="left:0;top:698px;width:33px;height:9px;overflow:hidden;"><span class="t" style="left:1px;width:33px;text-align:center;top:-8.044px;font-size:16px;line-height:16px;color:#444444;">14</span></div>
<div class="a" style="left:8px;top:732px;width:25px;height:1px;background:#dadada;"></div>
<div class="a" style="left:0;top:708px;width:33px;height:24px;overflow:hidden;"><span class="t" style="left:1px;width:33px;text-align:center;top:6.9559999999999995px;font-size:16px;line-height:16px;color:#444444;">15</span></div>
<div class="a" style="left:8px;top:757px;width:25px;height:1px;background:#dadada;"></div>
<div class="a" style="left:0;top:733px;width:33px;height:24px;overflow:hidden;"><span class="t" style="left:1px;width:33px;text-align:center;top:6.9559999999999995px;font-size:16px;line-height:16px;color:#444444;">16</span></div>
<div class="a" style="left:8px;top:782px;width:25px;height:1px;background:#dadada;"></div>
<div class="a" style="left:0;top:758px;width:33px;height:24px;overflow:hidden;"><span class="t" style="left:1px;width:33px;text-align:center;top:6.9559999999999995px;font-size:16px;line-height:16px;color:#444444;">17</span></div>
<div class="a" style="left:8px;top:806px;width:25px;height:1px;background:#dadada;"></div>
<div class="a" style="left:0;top:783px;width:33px;height:23px;overflow:hidden;"><span class="t" style="left:1px;width:33px;text-align:center;top:5.9559999999999995px;font-size:16px;line-height:16px;color:#444444;">18</span></div>
<div class="a" style="left:8px;top:830px;width:25px;height:1px;background:#dadada;"></div>
<div class="a" style="left:0;top:807px;width:33px;height:23px;overflow:hidden;"><span class="t" style="left:1px;width:33px;text-align:center;top:5.9559999999999995px;font-size:16px;line-height:16px;color:#444444;">19</span></div>
<div class="a" style="left:8px;top:854px;width:25px;height:1px;background:#dadada;"></div>
<div class="a" style="left:0;top:831px;width:33px;height:23px;overflow:hidden;"><span class="t" style="left:1px;width:33px;text-align:center;top:5.9559999999999995px;font-size:16px;line-height:16px;color:#444444;">20</span></div>
<div class="a" style="left:8px;top:878px;width:25px;height:1px;background:#dadada;"></div>
<div class="a" style="left:0;top:855px;width:33px;height:23px;overflow:hidden;"><span class="t" style="left:1px;width:33px;text-align:center;top:5.9559999999999995px;font-size:16px;line-height:16px;color:#444444;">21</span></div>
<div class="a" style="left:8px;top:902px;width:25px;height:1px;background:#dadada;"></div>
<div class="a" style="left:0;top:879px;width:33px;height:23px;overflow:hidden;"><span class="t" style="left:1px;width:33px;text-align:center;top:5.9559999999999995px;font-size:16px;line-height:16px;color:#444444;">22</span></div>
<div class="a" style="left:8px;top:926px;width:25px;height:1px;background:#dadada;"></div>
<div class="a" style="left:0;top:903px;width:33px;height:23px;overflow:hidden;"><span class="t" style="left:1px;width:33px;text-align:center;top:5.9559999999999995px;font-size:16px;line-height:16px;color:#444444;">23</span></div>
<div class="a" style="left:8px;top:950px;width:25px;height:1px;background:#dadada;"></div>
<div class="a" style="left:0;top:927px;width:33px;height:23px;overflow:hidden;"><span class="t" style="left:1px;width:33px;text-align:center;top:5.9559999999999995px;font-size:16px;line-height:16px;color:#444444;">24</span></div>
<div class="a" style="left:8px;top:974px;width:25px;height:1px;background:#dadada;"></div>
<div class="a" style="left:0;top:951px;width:33px;height:23px;overflow:hidden;"><span class="t" style="left:1px;width:33px;text-align:center;top:5.9559999999999995px;font-size:16px;line-height:16px;color:#444444;">25</span></div>
<div class="a" style="left:8px;top:998px;width:25px;height:1px;background:#dadada;"></div>
<div class="a" style="left:0;top:975px;width:33px;height:23px;overflow:hidden;"><span class="t" style="left:1px;width:33px;text-align:center;top:5.9559999999999995px;font-size:16px;line-height:16px;color:#444444;">26</span></div>
<div class="a" style="left:8px;top:1022px;width:25px;height:1px;background:#dadada;"></div>
<div class="a" style="left:0;top:999px;width:33px;height:23px;overflow:hidden;"><span class="t" style="left:1px;width:33px;text-align:center;top:5.9559999999999995px;font-size:16px;line-height:16px;color:#444444;">27</span></div>
<div class="a" style="left:45px;top:334px;width:1849px;height:71px;background:#039c57;"></div>
<div class="a" style="left:833px;top:376px;width:160px;height:29px;background:#f2f2f2;"></div>
<div class="a" style="left:45px;top:405px;width:1849px;height:50px;background:#f2f2f2;"></div>
<div class="a" style="left:354px;top:423px;width:158px;height:32px;background:#fff;"></div>
<svg class="a" style="left:46px;top:349px;" width="40" height="34" viewBox="0 0 40 34"><g transform="translate(-46,-349)" fill="none" stroke="#ffffff" stroke-width="1.7">
<path d="M65.9 351.2 C72.3 351.2 76.8 356.3 76.6 363 C76.4 370 70.5 376.8 65.9 380.5 C61.3 376.8 55.4 370 55.2 363 C55 356.3 59.5 351.2 65.9 351.2 Z"/>
<path d="M57.3 356.2 Q54.2 356.2 54 353.3 M74.5 356.2 Q77.6 356.2 77.8 353.3" stroke-width="1.4"/>
<circle cx="60.7" cy="361" r="3.1" stroke-width="1.5"/><circle cx="70.9" cy="361" r="3.1" stroke-width="1.5"/>
<path d="M57.2 358.8 Q60.3 354.6 64 357 Q65.9 358.5 65.9 363.8 M74.6 358.8 Q71.5 354.6 67.8 357 Q65.9 358.5 65.9 363.8" stroke-width="1.5"/>
<path d="M47 373.4 H85" stroke-width="2"/>
<path d="M63.3 373.6 L65.9 377.2 L68.5 373.6" stroke-width="1.3"/>
</g><circle cx="14.7" cy="12" r="1.1" fill="#ffffff"/><circle cx="24.9" cy="12" r="1.1" fill="#ffffff"/></svg>
<span class="t" style="left:92.00px;top:351px;font-size:29.07px;line-height:32px;font-weight:normal;font-style:italic;color:#ffffff;transform:scaleX(0.9040);-webkit-text-stroke:0.6px #039c57;">VIZUAL</span>
<span class="t" style="left:45.80px;top:382px;font-size:9.45px;line-height:11px;font-weight:normal;font-style:normal;color:#ffffff;transform:scaleX(0.8463);-webkit-text-stroke:0.25px #fff;">PLANILHAS EMPRESARIAIS</span>
<div class="a" style="left:159px;top:388px;width:24px;height:2px;background:#fff;"></div>
<svg class="a" style="left:265px;top:344px;" width="29" height="29" viewBox="0 0 29 29"><path d="M3 22 L19.5 5.5 L24 10 L7.5 26.5 L1.5 28 Z" fill="#ffffff"/><path d="M21 4 L23.5 1.5 Q25 0.5 26.5 2 L27.5 3 Q28.5 4.5 27.5 5.5 L25.5 8.5 Z" fill="#ffffff"/><path d="M5 23 L7 25" stroke="#039c57" stroke-width="1"/></svg>
<svg class="a" style="left:418px;top:342px;" width="34" height="34" viewBox="0 0 34 34"><defs><mask id="tm2" maskUnits="userSpaceOnUse" x="-100" y="-100" width="200" height="200"><rect x="-100" y="-100" width="200" height="200" fill="#fff"/><path d="M16 -4.85 H56 V-10 H80 L72 0.5 L80 11 H56 V4.85 H16 Z" fill="#000" stroke="#000" stroke-width="11" stroke-linejoin="round"/></mask></defs>
<g transform="translate(16.1,16.6) scale(0.218) rotate(-45)"><g mask="url(#tm2)"><circle r="55.7" fill="none" stroke="#fff" stroke-width="10"/><circle r="33.2" fill="none" stroke="#fff" stroke-width="10.5"/><circle r="15.6" fill="#fff"/></g><path d="M0 -5.5 H56 V-10 H80 L72 0.5 L80 11 H56 V5.5 H0 Z" fill="#fff"/></g></svg>
<svg class="a" style="left:578px;top:345px;" width="32" height="28" viewBox="0 0 32 28"><path d="M2 5 Q2 2.5 4.5 2.5 Q7 2.5 7 5 V24.5 Q7 27 4.5 27 Q2 27 2 24.5 Z" fill="none" stroke="#ffffff" stroke-width="1.9"/><path d="M7 6.5 H29.5 V26.8 H4.5" fill="none" stroke="#ffffff" stroke-width="1.9"/><rect x="9.5" y="8.8" width="17.5" height="15.5" fill="none" stroke="#ffffff" stroke-width="1.3"/><path d="M12 13 V22 H16.5 M12 17.5 H15 M24.5 13 V22 H20 M21.5 17.5 H24.5 M13 13 H16 M20.5 13 H24" fill="none" stroke="#ffffff" stroke-width="1.6"/><path d="M15.5 19.5 L28 6 L30.5 8.5 L18 22 L14.5 23 Z" fill="#ffffff" stroke="#039c57" stroke-width="0.8"/></svg>
<svg class="a" style="left:740px;top:345px;" width="26" height="29" viewBox="0 0 26 29"><path d="M2.3 2.3 H15.5 L23.6 9.5 V26.7 H2.3 Z" fill="none" stroke="#ffffff" stroke-width="2.5" stroke-linejoin="miter"/><path d="M15.5 2.3 V9.5 H23.6" fill="none" stroke="#ffffff" stroke-width="2"/><path d="M6 11.3 H10.5 M6 14.3 H20 M6 17 H20 M6 19.7 H20 M6 22.5 H20" stroke="#ffffff" stroke-width="1.4"/></svg>
<svg class="a" style="left:900px;top:344px;" width="32" height="32" viewBox="0 0 32 32"><circle cx="15.4" cy="15.4" r="13" fill="#ffffff"/><path d="M15.4 15.4 V1 M15.4 15.4 H30 M15.4 15.4 L25.5 25.5" stroke="#039c57" stroke-width="1.4"/></svg>
<svg class="a" style="left:1059px;top:344px;" width="28" height="28" viewBox="0 0 28 28"><rect x="10.5" y="0.5" width="15" height="10" fill="#ffffff"/><path d="M12.5 10 L13 13.5 L15.5 10 Z" fill="#ffffff"/><text x="18" y="8.8" font-family="Liberation Sans" font-size="8.5" fill="#039c57" text-anchor="middle">?</text><circle cx="6.5" cy="13.5" r="3" fill="#ffffff"/><path d="M0.5 22 Q0.5 17.5 6.5 17.5 Q12.5 17.5 12.5 22 Z" fill="#ffffff"/><circle cx="15" cy="18.5" r="3.2" fill="#ffffff" stroke="#039c57" stroke-width="0.8"/><path d="M8.5 27.5 Q8.5 22.5 15 22.5 Q21.5 22.5 21.5 27.5 Z" fill="#ffffff" stroke="#039c57" stroke-width="0.8"/></svg>
<span class="t" style="left:233.00px;top:385px;font-size:14.83px;line-height:16px;font-weight:bold;font-style:normal;color:#ffffff;transform:scaleX(0.9903);">CADASTRO</span>
<span class="t" style="left:376.30px;top:385px;font-size:14.83px;line-height:16px;font-weight:bold;font-style:normal;color:#ffffff;transform:scaleX(1.0249);">LANÇAMENTOS</span>
<span class="t" style="left:531.70px;top:385px;font-size:14.83px;line-height:16px;font-weight:bold;font-style:normal;color:#ffffff;transform:scaleX(1.0063);">PLANO DE AÇÃO</span>
<span class="t" style="left:706.70px;top:385px;font-size:14.83px;line-height:16px;font-weight:bold;font-style:normal;color:#ffffff;transform:scaleX(0.9835);">RELATÓRIOS</span>
<span class="t" style="left:1047.00px;top:385px;font-size:14.83px;line-height:16px;font-weight:bold;font-style:normal;color:#ffffff;transform:scaleX(1.0044);">AJUDA</span>
<span class="t" style="left:865.80px;top:385px;font-size:14.83px;line-height:16px;font-weight:bold;font-style:normal;color:#0d0d0d;transform:scaleX(1.0118);">DASHBOARD</span>
<span class="t" style="left:1826.80px;top:342px;font-size:13.08px;line-height:15px;font-weight:normal;font-style:normal;color:#ffffff;transform:scaleX(1.0233);">versão 6.0</span>
<span class="t" style="left:251.25px;top:434px;font-size:15.99px;line-height:17px;font-weight:bold;font-style:normal;color:#262626;transform:scaleX(0.8712);">GERAL</span>
<span class="t" style="left:408.25px;top:435px;font-size:15.99px;line-height:17px;font-weight:bold;font-style:normal;color:#262626;transform:scaleX(0.9676);">METAS</span>
<span class="t" style="left:543.75px;top:437px;font-size:15.99px;line-height:17px;font-weight:bold;font-style:normal;color:#262626;transform:scaleX(0.9367);">CATEGORIA</span>
<div class="a" style="left:48px;top:469px;width:127px;height:43px;background:#fff;border:1px solid #7a7a7a;"></div>
<div class="a" style="left:133px;top:470px;width:42px;height:42px;background:#f0f0f0;border-top:1px solid #fff;border-left:1px solid #fff;border-right:2px solid #000;border-bottom:2px solid #000;"></div>
<svg class="a" style="left:143px;top:485px;" width="22" height="12" viewBox="0 0 22 12"><path d="M0 0.5 H21 L10.5 11.5 Z" fill="#000"/></svg>
<div class="a" style="left:241px;top:469px;width:929px;height:43px;background:#fff;border:1px solid #7a7a7a;"></div>
<div class="a" style="left:1128px;top:470px;width:42px;height:42px;background:#f0f0f0;border-top:1px solid #fff;border-left:1px solid #fff;border-right:2px solid #000;border-bottom:2px solid #000;"></div>
<svg class="a" style="left:1138px;top:485px;" width="22" height="12" viewBox="0 0 22 12"><path d="M0 0.5 H21 L10.5 11.5 Z" fill="#000"/></svg>
<span class="t" style="left:53.30px;top:484px;font-size:13.08px;line-height:15px;font-weight:normal;font-style:normal;color:#0d0d0d;transform:scaleX(0.9311);">2022</span>
<span class="t" style="left:246.25px;top:484px;font-size:13.52px;line-height:15px;font-weight:normal;font-style:normal;color:#0d0d0d;transform:scaleX(0.9649);">Fazer caminhada todos os dias</span>
<div class="a" style="left:45px;top:526px;width:1849px;height:1px;background:#8a8a8a;"></div>
<span class="t" style="left:49.70px;top:541px;font-size:17.88px;line-height:20px;font-weight:bold;font-style:normal;color:#0d0d0d;transform:scaleX(0.9333);">Foi Concluída?</span>
<span class="t" style="left:449.80px;top:541px;font-size:17.88px;line-height:20px;font-weight:bold;font-style:normal;color:#0d0d0d;transform:scaleX(0.9465);">% de Conclusão</span>
<span class="t" style="left:769.80px;top:541px;font-size:17.88px;line-height:20px;font-weight:bold;font-style:normal;color:#0d0d0d;transform:scaleX(0.9097);">É Smart?</span>
<span class="t" style="left:1089.50px;top:541px;font-size:17.88px;line-height:20px;font-weight:bold;font-style:normal;color:#0d0d0d;transform:scaleX(0.9335);">Status</span>
<span class="t" style="left:1409.70px;top:541px;font-size:17.88px;line-height:20px;font-weight:bold;font-style:normal;color:#0d0d0d;">Meta Iniciada</span>
<span class="t" style="left:49.80px;top:677px;font-size:17.88px;line-height:20px;font-weight:bold;font-style:normal;color:#0d0d0d;transform:scaleX(0.9322);">Observações</span>
<span class="t" style="left:1409.70px;top:677px;font-size:17.88px;line-height:20px;font-weight:bold;font-style:normal;color:#0d0d0d;transform:scaleX(0.9701);">Previsão de Término</span>
<div class="a" style="left:45px;top:572px;width:321px;height:77px;background:#fff;border:1px solid #858585;"></div>
<div class="a" style="left:286px;top:573px;width:79px;height:75px;background:#ffc216;border-left:1px solid #858585;"></div>
<span class="t" style="left:135.60px;top:591px;font-size:36.34px;line-height:41px;font-weight:bold;font-style:normal;color:#000;transform:scaleX(0.8988);">Sim</span>
<svg class="a" style="left:308px;top:595px;" width="34" height="34" viewBox="0 0 34 34"><circle cx="17.3" cy="17" r="14.3" fill="none" stroke="#000" stroke-width="2.2"/><circle cx="12.2" cy="12.6" r="1.9" fill="#000"/><circle cx="22.4" cy="12.6" r="1.9" fill="#000"/><path d="M9.5 18.5 Q17.3 27.5 25.1 18.5" fill="none" stroke="#000" stroke-width="2.2"/></svg>
<div class="a" style="left:445px;top:572px;width:241px;height:77px;background:#fff;border:1px solid #858585;"></div>
<span class="t" style="left:523.00px;top:591px;font-size:36.34px;line-height:41px;font-weight:bold;font-style:normal;color:#000;transform:scaleX(0.9274);">100%</span>
<div class="a" style="left:765px;top:572px;width:241px;height:77px;background:#039c57;border:1px solid #7f8f86;"></div>
<span class="t" style="left:855.90px;top:591px;font-size:36.34px;line-height:41px;font-weight:bold;font-style:normal;color:#fff;transform:scaleX(0.8958);">Sim</span>
<div class="a" style="left:1086px;top:573px;width:239px;height:75px;background:#039c57;"></div>
<span class="t" style="left:1129.90px;top:598px;font-size:22.09px;line-height:25px;font-weight:bold;font-style:normal;color:#fff;transform:scaleX(0.9121);">Meta Alcançada</span>
<div class="a" style="left:1405px;top:572px;width:241px;height:77px;background:#fff;border:1px solid #858585;"></div>
<span class="t" style="left:1429.40px;top:591px;font-size:36.05px;line-height:41px;font-weight:bold;font-style:normal;color:#000;transform:scaleX(1.0703);">01/01/2022</span>
<div class="a" style="left:1405px;top:708px;width:241px;height:76px;background:#fff;border:1px solid #858585;"></div>
<span class="t" style="left:1429.40px;top:727px;font-size:36.05px;line-height:41px;font-weight:bold;font-style:normal;color:#000;transform:scaleX(1.0703);">01/07/2022</span>
<svg class="a" style="left:1660px;top:580px;" width="66" height="58" viewBox="0 0 66 58"><path d="M4.1 28.75 L30 3.4 V16 H61.9 V41.9 H30 V54 Z" fill="#059a55"/></svg>
<svg class="a" style="left:1658px;top:712px;" width="66" height="60" viewBox="0 0 66 60"><path d="M3.9 30.25 L30.1 3.6 V17.1 H62 V43.6 H30.1 V56.5 Z" fill="#059a55"/></svg>
<div class="a" style="left:45px;top:708px;width:1281px;height:292px;background:#f2f2f2;border:1px solid #7a7a7a;"></div>
<span class="t" style="left:571.25px;top:838px;font-size:30.23px;line-height:33px;font-weight:normal;font-style:normal;color:#000;transform:scaleX(0.9461);">Sem observações</span>
<svg class="a" style="left:1460px;top:835px;" width="140" height="140" viewBox="0 0 140 140">
<defs><mask id="tm" maskUnits="userSpaceOnUse" x="-100" y="-100" width="200" height="200"><rect x="-100" y="-100" width="200" height="200" fill="#fff"/>
<path d="M16 -4.85 H56 V-10 H80 L72 0.5 L80 11 H56 V4.85 H16 Z" fill="#000" stroke="#000" stroke-width="11" stroke-linejoin="round"/></mask></defs>
<g transform="translate(69.59999999999991,72.79999999999995) rotate(-45)">
<g mask="url(#tm)">
<circle r="55.7" fill="none" stroke="#000" stroke-width="9.4"/>
<circle r="33.2" fill="none" stroke="#000" stroke-width="9.7"/>
<circle r="15.6" fill="#000"/>
</g>
<path d="M0 -4.85 H56 V-10 H80 L72 0.5 L80 11 H56 V4.85 H0 Z" fill="#000"/>
</g></svg>
<div class="a" style="left:1894px;top:311px;width:26px;height:741px;background:#e7eaf0;"></div>
<div class="a" style="left:1897px;top:312px;width:21px;height:714px;background:#f6f6f6;border-radius:10px;"></div>
<div class="a" style="left:1902px;top:332px;width:11px;height:648px;background:#6e6e6e;border-radius:6px;"></div>
<svg class="a" style="left:1902px;top:317px;" width="11" height="8" viewBox="0 0 11 8"><path d="M0 8 L5.5 0.5 L11 8 Z" fill="#6e6e6e"/></svg>
<svg class="a" style="left:1902px;top:1011px;" width="11" height="9" viewBox="0 0 11 9"><path d="M0 0 L5.5 8.5 L11 0 Z" fill="#6e6e6e"/></svg>
<div class="a" style="left:1894px;top:311px;width:1px;height:713px;background:#c9c9c9;"></div>
<div class="a" style="left:0px;top:1023px;width:1894px;height:1px;background:#a9a9a9;"></div>
<div class="a" style="left:0px;top:1024px;width:1894px;height:28px;background:#f3f3f3;"></div>
<div class="a" style="left:0px;top:1024px;width:16px;height:28px;background:#e7eaf0;"></div>
<div class="a" style="left:103px;top:1048px;width:1091px;height:4px;background:#e9e9e9;"></div>
<div class="a" style="left:1252px;top:1024px;width:642px;height:28px;background:#e7eaf0;"></div>
<div class="a" style="left:1281px;top:1025px;width:615px;height:22px;background:#f3f3f3;border-radius:11px;"></div>
<svg class="a" style="left:28px;top:1033px;" width="6" height="10" viewBox="0 0 6 10"><path d="M6 0 V10 L0 5 Z" fill="#c3c3c3"/></svg>
<svg class="a" style="left:57px;top:1033px;" width="6" height="10" viewBox="0 0 6 10"><path d="M0 0 V10 L6 5 Z" fill="#107c41"/></svg>
<div class="a" style="left:103.5px;top:1028px;width:1px;height:20px;background:#9c9c9c;"></div>
<div class="a" style="left:227.5px;top:1028px;width:1px;height:20px;background:#9c9c9c;"></div>
<div class="a" style="left:353px;top:1028px;width:1px;height:20px;background:#9c9c9c;"></div>
<div class="a" style="left:458.5px;top:1028px;width:1px;height:20px;background:#9c9c9c;"></div>
<div class="a" style="left:560.5px;top:1028px;width:1px;height:20px;background:#9c9c9c;"></div>
<div class="a" style="left:697px;top:1028px;width:1px;height:20px;background:#9c9c9c;"></div>
<div class="a" style="left:766.5px;top:1028px;width:1px;height:20px;background:#9c9c9c;"></div>
<div class="a" style="left:1012.5px;top:1028px;width:1px;height:20px;background:#9c9c9c;"></div>
<div class="a" style="left:1093.5px;top:1028px;width:1px;height:20px;background:#9c9c9c;"></div>
<div class="a" style="left:848px;top:1024px;width:83px;height:25px;background:#fff;border-left:1px solid #d0d0d0;border-right:1px solid #d0d0d0;"></div>
<div class="a" style="left:848px;top:1046px;width:83px;height:3px;background:#107c41;"></div>
<span class="t" style="left:118.25px;top:1026px;font-size:15.99px;line-height:17px;font-weight:normal;font-style:normal;color:#3b3b3b;transform:scaleX(0.9711);">CAD_METAS</span>
<span class="t" style="left:241.25px;top:1026px;font-size:15.99px;line-height:17px;font-weight:normal;font-style:normal;color:#3b3b3b;transform:scaleX(0.9531);">CAD_CATEG.</span>
<span class="t" style="left:366.25px;top:1026px;font-size:15.99px;line-height:17px;font-weight:normal;font-style:normal;color:#3b3b3b;transform:scaleX(1.0025);">CAD_ANO</span>
<span class="t" style="left:472.70px;top:1026px;font-size:15.99px;line-height:17px;font-weight:normal;font-style:normal;color:#3b3b3b;transform:scaleX(1.0103);">LANÇAM.</span>
<span class="t" style="left:574.50px;top:1026px;font-size:15.99px;line-height:17px;font-weight:normal;font-style:normal;color:#3b3b3b;transform:scaleX(0.9848);">PLANO_AÇÃO</span>
<span class="t" style="left:709.50px;top:1026px;font-size:15.99px;line-height:17px;font-weight:normal;font-style:normal;color:#3b3b3b;transform:scaleX(0.8539);">REL_1</span>
<span class="t" style="left:780.75px;top:1026px;font-size:15.99px;line-height:17px;font-weight:normal;font-style:normal;color:#3b3b3b;transform:scaleX(0.9705);">DASH1</span>
<span class="t" style="left:944.50px;top:1026px;font-size:15.99px;line-height:17px;font-weight:normal;font-style:normal;color:#3b3b3b;transform:scaleX(0.9705);">DASH3</span>
<span class="t" style="left:1026.25px;top:1026px;font-size:15.99px;line-height:17px;font-weight:normal;font-style:normal;color:#3b3b3b;transform:scaleX(0.9779);">AJUDA</span>
<span class="t" style="left:1109.50px;top:1026px;font-size:15.99px;line-height:17px;font-weight:normal;font-style:normal;color:#3b3b3b;transform:scaleX(1.0302);">Config_rela</span>
<span class="t" style="left:860.50px;top:1026px;font-size:15.99px;line-height:17px;font-weight:bold;font-style:normal;color:#107c41;transform:scaleX(1.0516);">DASH2</span>
<span class="t" style="left:1202.00px;top:1026px;font-size:16.00px;line-height:17px;font-weight:normal;font-style:normal;color:#0b6a30;transform:scaleX(0.9379);">...</span>
<svg class="a" style="left:1226px;top:1028px;" width="22" height="21" viewBox="0 0 22 21"><circle cx="11" cy="10.5" r="9.5" fill="none" stroke="#424242" stroke-width="1.3"/><path d="M11 5.5 V15.5 M6 10.5 H16" stroke="#424242" stroke-width="1.4"/></svg>
<div class="a" style="left:1265px;top:1032px;width:3px;height:3px;background:#424242;border-radius:1px;"></div>
<div class="a" style="left:1265px;top:1037px;width:3px;height:3px;background:#424242;border-radius:1px;"></div>
<div class="a" style="left:1265px;top:1042px;width:3px;height:3px;background:#424242;border-radius:1px;"></div>
<svg class="a" style="left:1287px;top:1031px;" width="9" height="11" viewBox="0 0 9 11"><path d="M9 0 V11 L0 5.5 Z" fill="#6e6e6e"/></svg>
<div class="a" style="left:1302px;top:1031px;width:59px;height:11px;background:#6e6e6e;border-radius:6px;"></div>
<svg class="a" style="left:1882px;top:1031px;" width="9" height="11" viewBox="0 0 9 11"><path d="M0 0 V11 L9 5.5 Z" fill="#6e6e6e"/></svg>
<div class="a" style="left:0px;top:1052px;width:1920px;height:28px;background:#f3f3f3;"></div>
<span class="t" style="left:9.50px;top:1059px;font-size:13.81px;line-height:15px;font-weight:normal;font-style:normal;color:#333333;transform:scaleX(0.9341);">Pronto</span>
<svg class="a" style="left:72px;top:1057px;" width="20" height="18" viewBox="0 0 20 18"><rect x="1" y="1" width="16" height="14" fill="none" stroke="#424242" stroke-width="1.3"/><path d="M1 4 H17 M4 7.5 H8 M4 10.5 H7" stroke="#424242" stroke-width="1.2"/><circle cx="14" cy="12" r="4.8" fill="#f3f3f3" stroke="#424242" stroke-width="1.3"/><circle cx="14" cy="12" r="2.3" fill="#424242"/></svg>
<svg class="a" style="left:112px;top:1056px;" width="20" height="19" viewBox="0 0 20 19"><circle cx="8" cy="2.6" r="2" fill="none" stroke="#424242" stroke-width="1.2"/><path d="M1 6 L8 7.5 L15 6 M8 7.5 V12 L4 18 M8 12 L10 14" fill="none" stroke="#424242" stroke-width="1.3"/><path d="M12 12.5 L18.5 18.5 M18.5 12.5 L12 18.5" stroke="#424242" stroke-width="1.3"/></svg>
<span class="t" style="left:135.00px;top:1059px;font-size:13.81px;line-height:15px;font-weight:normal;font-style:normal;color:#333333;transform:scaleX(0.9385);">Acessibilidade: investigar</span>
<span class="t" style="left:1312.50px;top:1059px;font-size:13.81px;line-height:15px;font-weight:normal;font-style:normal;color:#333333;transform:scaleX(0.9442);">Média: 4</span>
<span class="t" style="left:1383.30px;top:1059px;font-size:13.81px;line-height:15px;font-weight:normal;font-style:normal;color:#333333;transform:scaleX(0.9283);">Contagem: 2</span>
<span class="t" style="left:1477.30px;top:1059px;font-size:13.81px;line-height:15px;font-weight:normal;font-style:normal;color:#333333;transform:scaleX(0.9033);">Soma: 8</span>
<div class="a" style="left:1548px;top:1053px;width:50px;height:27px;background:#dedede;"></div>
<svg class="a" style="left:1563px;top:1056px;" width="19" height="18" viewBox="0 0 19 18"><rect x="1" y="1" width="16.5" height="16" fill="none" stroke="#424242" stroke-width="1.5"/><path d="M6.5 1 V17 M12 1 V17 M1 6.3 H17.5 M1 11.7 H17.5" stroke="#424242" stroke-width="1.4"/></svg>
<svg class="a" style="left:1613px;top:1056px;" width="20" height="18" viewBox="0 0 20 18"><rect x="1" y="1" width="17.5" height="16" fill="none" stroke="#424242" stroke-width="1.5"/><rect x="5" y="4" width="9.5" height="10" fill="none" stroke="#424242" stroke-width="1.3"/><path d="M7 7 H12.5 M7 9.3 H12.5 M7 11.5 H12.5" stroke="#424242" stroke-width="1"/></svg>
<svg class="a" style="left:1663px;top:1056px;" width="20" height="18" viewBox="0 0 20 18"><rect x="1" y="1" width="17.5" height="16" fill="none" stroke="#424242" stroke-width="1.5"/><path d="M1 11 H10.5 V1 M6 1 V8" fill="none" stroke="#424242" stroke-width="1.4"/></svg>
<div class="a" style="left:1705px;top:1065px;width:10px;height:1.3px;background:#424242;"></div>
<div class="a" style="left:1721px;top:1065px;width:125px;height:1px;background:#8a8a8a;"></div>
<div class="a" style="left:1781px;top:1059px;width:6px;height:14px;background:#5e5e5e;border-radius:1px;"></div>
<svg class="a" style="left:1851px;top:1059px;" width="12" height="13" viewBox="0 0 12 13"><path d="M6 0.5 V12.5 M0.5 6.5 H11.5" stroke="#424242" stroke-width="1.3"/></svg>
<span class="t" style="left:1878.75px;top:1059px;font-size:13.81px;line-height:15px;font-weight:normal;font-style:normal;color:#333333;transform:scaleX(0.8635);">100%</span>
</body></html>
